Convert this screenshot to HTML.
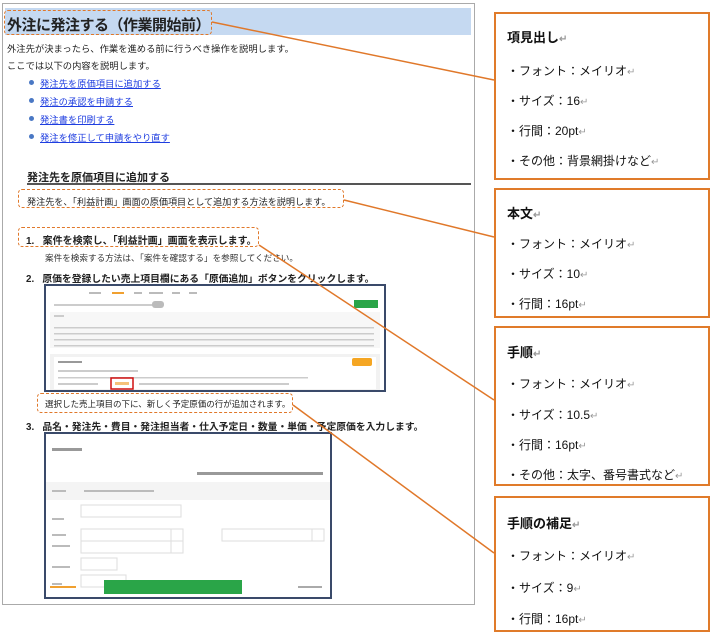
<!DOCTYPE html>
<html><head><meta charset="utf-8"><style>
*{margin:0;padding:0;box-sizing:border-box}
body{width:715px;height:637px;background:#fff;position:relative;overflow:hidden;font-family:"Liberation Sans","Noto Sans CJK JP",sans-serif;color:#222}
.a{position:absolute;white-space:nowrap}
.d{position:absolute;border:1.5px dashed #e0782a;border-radius:4px}
.box{position:absolute;left:494px;width:216px;border:2px solid #e07b2a;background:#fff;padding-left:11px}
.box div{position:absolute;left:11px;font-size:12px;white-space:nowrap;color:#111}
.box .h{font-weight:bold;font-size:13px}
.r{color:#999;font-size:10px}
.lk{color:#1f3ee0;text-decoration:underline;font-size:9.3px}
.dot{position:absolute;width:5px;height:5px;border-radius:50%;background:#4a78c4}
.b{font-weight:bold;font-size:9.8px}
</style></head><body>
<div class="a" style="left:2px;top:3px;width:473px;height:602px;border:1px solid #aaa"></div>
<div class="a" style="left:5px;top:8px;width:466px;height:27px;background:#c5d9f1"></div>
<div class="a" style="left:7px;top:14px;font-size:15px;font-weight:bold;letter-spacing:-0.5px">外注に発注する（作業開始前）</div>
<div class="d" style="left:4px;top:10px;width:208px;height:25px"></div>
<div class="a" style="left:7px;top:41px;font-size:9.3px">外注先が決まったら、作業を進める前に行うべき操作を説明します。</div>
<div class="a" style="left:7px;top:58px;font-size:9.3px">ここでは以下の内容を説明します。</div>
<div class="dot" style="left:29px;top:80px"></div><div class="a lk" style="left:40px;top:76px">発注先を原価項目に追加する</div>
<div class="dot" style="left:29px;top:98px"></div><div class="a lk" style="left:40px;top:94px">発注の承認を申請する</div>
<div class="dot" style="left:29px;top:116px"></div><div class="a lk" style="left:40px;top:112px">発注書を印刷する</div>
<div class="dot" style="left:29px;top:134px"></div><div class="a lk" style="left:40px;top:130px">発注を修正して申請をやり直す</div>
<div class="a" style="left:27px;top:169px;font-size:11px;font-weight:bold">発注先を原価項目に追加する</div>
<div class="a" style="left:27px;top:183px;width:444px;height:2px;background:#555"></div>
<div class="a" style="left:27px;top:194px;font-size:9.1px">発注先を、「利益計画」画面の原価項目として追加する方法を説明します。</div>
<div class="d" style="left:18px;top:189px;width:326px;height:19px"></div>
<div class="a b" style="left:26px;top:232px;font-size:10px">1.&nbsp;&nbsp; 案件を検索し、「利益計画」画面を表示します。</div>
<div class="d" style="left:18px;top:227px;width:241px;height:20px"></div>
<div class="a" style="left:45px;top:252px;font-size:8.6px;color:#333">案件を検索する方法は、「案件を確認する」を参照してください。</div>
<div class="a b" style="left:26px;top:271px">2.&nbsp;&nbsp; 原価を登録したい売上項目欄にある「原価追加」ボタンをクリックします。</div>
<svg class="a" style="left:44px;top:284px" width="342" height="108" viewBox="0 0 342 108">
<rect x="1" y="1" width="340" height="106" fill="#fff" stroke="#3a4a6a" stroke-width="2"/>
<g fill="#bbb"><rect x="45" y="8" width="12" height="2"/><rect x="68" y="8" width="12" height="2" fill="#f0a030"/><rect x="90" y="8" width="8" height="2"/><rect x="105" y="8" width="14" height="2"/><rect x="128" y="8" width="8" height="2"/><rect x="145" y="8" width="8" height="2"/></g>
<rect x="10" y="20" width="100" height="2" fill="#ccc"/><rect x="108" y="17" width="12" height="7" rx="3" fill="#bbb"/>
<rect x="310" y="16" width="24" height="8" fill="#2aa548"/>
<rect x="6" y="28" width="330" height="36" fill="#f7f7f7"/>
<g fill="#ccc"><rect x="10" y="31" width="10" height="2"/><rect x="10" y="43" width="320" height="1.5"/><rect x="10" y="49" width="320" height="1.5"/><rect x="10" y="55" width="320" height="1.5"/><rect x="10" y="61" width="320" height="1.5"/></g>
<rect x="6" y="70" width="330" height="36" fill="#f2f2f2"/>
<rect x="10" y="73" width="322" height="32" fill="#fff"/>
<rect x="14" y="77" width="24" height="2" fill="#999"/>
<rect x="308" y="74" width="20" height="8" rx="2" fill="#f5a623"/>
<g fill="#ccc"><rect x="14" y="86" width="80" height="2"/><rect x="14" y="93" width="250" height="1.5"/><rect x="14" y="99" width="40" height="2"/><rect x="95" y="99" width="150" height="2"/></g>
<rect x="67" y="94" width="22" height="11" fill="none" stroke="#d01010" stroke-width="1.5"/>
<rect x="71" y="98" width="14" height="3" fill="#f6c27a"/>
</svg>
<div class="a" style="left:45px;top:398px;font-size:8.5px">選択した売上項目の下に、新しく予定原価の行が追加されます。</div>
<div class="d" style="left:37px;top:393px;width:256px;height:20px"></div>
<div class="a b" style="left:26px;top:419px">3.&nbsp;&nbsp; 品名・発注先・費目・発注担当者・仕入予定日・数量・単価・予定原価を入力します。</div>
<svg class="a" style="left:44px;top:432px" width="288" height="167" viewBox="0 0 288 167">
<rect x="1" y="1" width="286" height="165" fill="#fff" stroke="#3a4a6a" stroke-width="2"/>
<rect x="8" y="16" width="30" height="3" fill="#999"/><rect x="153" y="40" width="126" height="3" fill="#999"/>
<rect x="2" y="50" width="284" height="18" fill="#f4f4f4"/>
<g fill="#bbb"><rect x="8" y="58" width="14" height="2"/><rect x="40" y="58" width="70" height="2"/></g>
<rect x="37" y="73" width="100" height="12" fill="none" stroke="#ddd"/>
<rect x="37" y="97" width="90" height="12" fill="none" stroke="#ddd"/><rect x="127" y="97" width="12" height="12" fill="none" stroke="#ddd"/>
<rect x="178" y="97" width="90" height="12" fill="none" stroke="#ddd"/><rect x="268" y="97" width="12" height="12" fill="none" stroke="#ddd"/>
<rect x="37" y="109" width="90" height="12" fill="none" stroke="#ddd"/><rect x="127" y="109" width="12" height="12" fill="none" stroke="#ddd"/>
<rect x="37" y="126" width="36" height="12" fill="none" stroke="#ddd"/>
<rect x="37" y="143" width="45" height="12" fill="none" stroke="#ddd"/>
<g fill="#bbb"><rect x="8" y="86" width="12" height="2"/><rect x="8" y="102" width="14" height="2"/><rect x="8" y="113" width="18" height="2"/><rect x="8" y="134" width="18" height="2"/><rect x="8" y="151" width="10" height="2"/></g>
<rect x="60" y="148" width="138" height="14" fill="#2aa548"/>
<rect x="6" y="154" width="26" height="2" fill="#f0a030"/>
<rect x="254" y="154" width="24" height="2" fill="#aaa"/>
</svg>
<svg class="a" style="left:0;top:0" width="715" height="637">
<g stroke="#e0782a" stroke-width="1.5" fill="none">
<line x1="212" y1="22" x2="494" y2="80"/>
<line x1="344" y1="200" x2="494" y2="237"/>
<line x1="259" y1="245" x2="494" y2="400"/>
<line x1="293" y1="405" x2="494" y2="553"/>
</g></svg>
<div class="box" style="top:12px;height:168px">
<div class="h" style="top:13px">項見出し<span class="r">↵</span></div>
<div style="top:48px">・フォント：メイリオ<span class="r">↵</span></div>
<div style="top:78px">・サイズ：16<span class="r">↵</span></div>
<div style="top:108px">・行間：20pt<span class="r">↵</span></div>
<div style="top:138px">・その他：背景網掛けなど<span class="r">↵</span></div>
</div>
<div class="box" style="top:188px;height:130px">
<div class="h" style="top:13px">本文<span class="r">↵</span></div>
<div style="top:45px">・フォント：メイリオ<span class="r">↵</span></div>
<div style="top:75px">・サイズ：10<span class="r">↵</span></div>
<div style="top:105px">・行間：16pt<span class="r">↵</span></div>
</div>
<div class="box" style="top:326px;height:160px">
<div class="h" style="top:14px">手順<span class="r">↵</span></div>
<div style="top:47px">・フォント：メイリオ<span class="r">↵</span></div>
<div style="top:78px">・サイズ：10.5<span class="r">↵</span></div>
<div style="top:108px">・行間：16pt<span class="r">↵</span></div>
<div style="top:138px">・その他：太字、番号書式など<span class="r">↵</span></div>
</div>
<div class="box" style="top:496px;height:136px">
<div class="h" style="top:15px">手順の補足<span class="r">↵</span></div>
<div style="top:49px">・フォント：メイリオ<span class="r">↵</span></div>
<div style="top:81px">・サイズ：9<span class="r">↵</span></div>
<div style="top:112px">・行間：16pt<span class="r">↵</span></div>
</div>
</body></html>
